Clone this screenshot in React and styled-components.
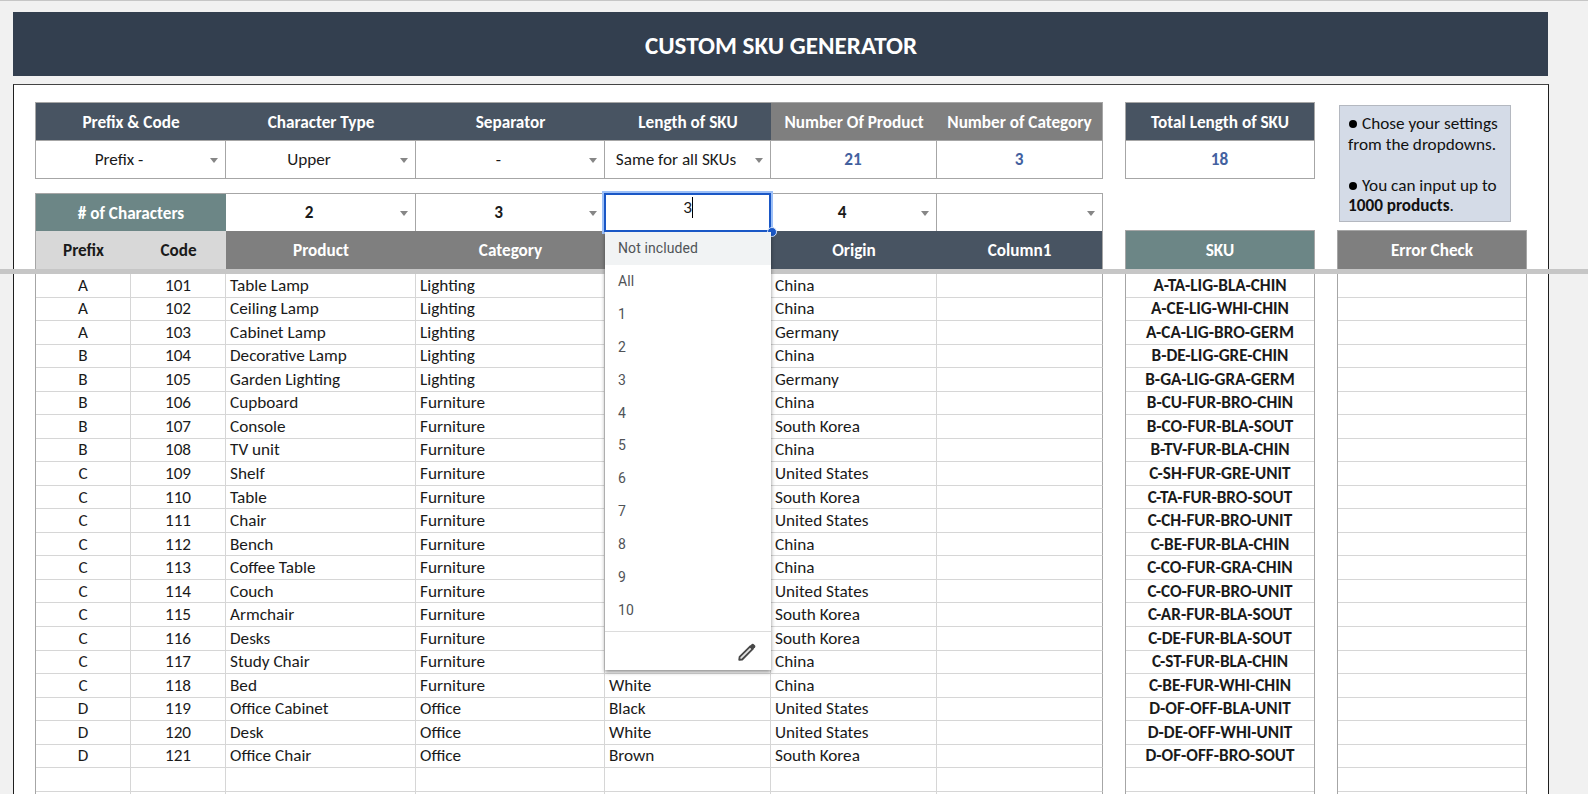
import React from "react";
import styled, { createGlobalStyle, css } from "styled-components";

const GlobalStyle = createGlobalStyle`
  * { box-sizing: border-box; }
  html, body { margin: 0; height: 794px; overflow: hidden; background: #f1f1f1; }
`;

const slate = "#485462";
const grey = "#7f7f7f";
const teal = "#6c8686";
const line = "#a6a6a6";
const softLine = "#d6d6d6";

const Page = styled.div`
  display: flex;
  flex-direction: column;
  width: 1588px;
  height: 794px;
  overflow: hidden;
  border-top: 1px solid #c6c6c6;
  background: #f1f1f1;
  color: #1a1a1a;
  font-family: Carlito, Calibri, Lato, "Open Sans", sans-serif;
  font-size: 17.2px;
`;

const TitleBar = styled.h1`
  flex: none;
  display: flex;
  align-items: center;
  justify-content: center;
  width: 1535px;
  height: 64px;
  margin: 11px 0 8px 13px;
  padding: 3px 0 0 1px;
  background: #333f4f;
  color: #fff;
  font-size: 25.1px;
  font-weight: 700;
`;

const sheet = css`
  width: 1536px;
  margin-left: 13px;
  padding-left: 21px;
  background: #fff;
  border: 0 solid #1f1f1f;
  border-left-width: 1px;
  border-right-width: 1px;
  display: flex;
`;

const FrozenPane = styled.section`
  ${sheet}
  flex: none;
  height: 185px;
  padding-top: 17px;
  border-top: 1px solid #444;
`;

const ScrollPane = styled.section`
  ${sheet}
  flex: 1;
  overflow: hidden;
`;

const FreezeBar = styled.div`
  flex: none;
  height: 5px;
  background: #c6c6c6;
`;

const Block = styled.div`
  flex: none;
  width: ${(p) => p.$width}px;
  margin-right: 22px;
`;

const SettingsGrid = styled.div`
  display: grid;
  grid-template-columns: 190px 190px 189px 166px 166px 166px;
  grid-template-rows: ${(p) => p.$rows};
  border: 1px solid ${line};
  border-right: 0;
  border-bottom-width: ${(p) => (p.$open ? 0 : 1)}px;
  margin-bottom: 14px;
`;

const SingleGrid = styled.div`
  display: grid;
  grid-template-rows: ${(p) => p.$rows};
  border: 1px solid ${line};
  border-bottom-width: ${(p) => (p.$open ? 0 : 1)}px;
  margin-bottom: ${(p) => p.$gap || 0}px;
`;

const HeaderCell = styled.div`
  display: flex;
  align-items: center;
  justify-content: center;
  padding-top: 1px;
  background: ${(p) => p.$bg};
  color: ${(p) => p.$color || "#fff"};
  font-weight: 700;
  white-space: nowrap;
  border-right: ${(p) => (p.$last ? `1px solid ${line}` : 0)};
`;

const PairHeader = styled.div`
  display: grid;
  grid-template-columns: 95px 95px;
`;

const ValueCell = styled.div`
  display: flex;
  align-items: center;
  justify-content: center;
  position: relative;
  padding: 0 ${(p) => (p.$picker ? 23 : 1)}px 0 0;
  border-top: ${(p) => (p.$top ? 1 : 0)}px solid ${line};
  border-right: ${(p) => (p.$bare ? 0 : 1)}px solid ${line};
  color: ${(p) => (p.$result ? "#43619f" : "#1a1a1a")};
  font-weight: ${(p) => (p.$bold || p.$result ? 700 : 400)};
  white-space: nowrap;
`;

const Arrow = styled.i`
  position: absolute;
  right: 7px;
  top: 50%;
  margin-top: -2px;
  border: 4.5px solid transparent;
  border-top: 5px solid #868686;
  border-bottom: 0;
`;

const ActiveCell = styled.div`
  position: relative;
  display: flex;
  justify-content: center;
  margin: -1px 0 -1px -1px;
  padding-top: 2px;
  background: #fff;
  border: 2px solid #1a57c6;
  box-shadow: 0 0 0 2px #9dc0f7;
  line-height: 21px;
  z-index: 3;
`;

const Caret = styled.span`
  width: 1px;
  height: 21px;
  margin-right: -1px;
  background: #000;
`;

const FillHandle = styled.span`
  position: absolute;
  right: -8px;
  bottom: -7px;
  width: 10px;
  height: 10px;
  border: 1px solid #cfe0fb;
  border-radius: 50%;
  background: #1a57c6;
  z-index: -1;
`;

const Menu = styled.ul`
  position: absolute;
  left: -1px;
  top: 37px;
  width: 166px;
  height: 438px;
  margin: 0;
  padding: 0;
  list-style: none;
  display: flex;
  flex-direction: column;
  background: #fff;
  box-shadow: 0 2px 4px rgba(0, 0, 0, 0.45);
  font-family: Roboto, sans-serif;
  font-size: 14px;
  letter-spacing: 0.1px;
  color: #505357;
  clip-path: inset(0 -6px -8px -6px);
`;

const MenuItem = styled.li`
  flex: 0 0 32.93px;
  display: flex;
  align-items: center;
  padding: 0 0 1px 13px;
  background: ${(p) => (p.$active ? "#f1f3f4" : "transparent")};
  line-height: 20px;
`;

const MenuFooter = styled.li`
  flex: 1;
  display: flex;
  align-items: center;
  justify-content: flex-end;
  margin-top: 4px;
  padding: 1px 14px 0 0;
  border-top: 1px solid #dcdcdc;
`;

const Note = styled.aside`
  width: 172px;
  height: 117px;
  margin: 3px 0 8px 2px;
  padding: 8px 8px 0 8px;
  background: #d4dbe7;
  border: 1px solid #b4b8c0;
  color: #111;
  line-height: 20.5px;
  white-space: pre-line;
`;

const Bullet = styled.span`
  display: inline-block;
  width: 8px;
  height: 8px;
  margin: 0 5px 1px 1px;
  border-radius: 50%;
  background: #000;
`;

const DataTable = styled.div`
  border-left: 1px solid ${line};
  border-right: ${(p) => (p.$closed ? 1 : 0)}px solid ${line};
`;

const DataRow = styled.div`
  display: grid;
  grid-template-columns: ${(p) => p.$columns};
  height: 23.54px;
`;

const DataCell = styled.div`
  display: flex;
  align-items: center;
  justify-content: ${(p) => (p.$left ? "flex-start" : "center")};
  padding: 1px 0 0 ${(p) => (p.$left ? 4 : 0)}px;
  border-bottom: 1px solid ${softLine};
  border-right: ${(p) => (p.$bare ? 0 : 1)}px solid ${(p) => (p.$edge ? line : softLine)};
  font-weight: ${(p) => (p.$bold ? 700 : 400)};
  line-height: 20px;
  white-space: nowrap;
`;

const products = [
  ["A", "101", "Table Lamp", "Lighting", "Black", "China", "A-TA-LIG-BLA-CHIN"],
  ["A", "102", "Ceiling Lamp", "Lighting", "White", "China", "A-CE-LIG-WHI-CHIN"],
  ["A", "103", "Cabinet Lamp", "Lighting", "Brown", "Germany", "A-CA-LIG-BRO-GERM"],
  ["B", "104", "Decorative Lamp", "Lighting", "Green", "China", "B-DE-LIG-GRE-CHIN"],
  ["B", "105", "Garden Lighting", "Lighting", "Gray", "Germany", "B-GA-LIG-GRA-GERM"],
  ["B", "106", "Cupboard", "Furniture", "Brown", "China", "B-CU-FUR-BRO-CHIN"],
  ["B", "107", "Console", "Furniture", "Black", "South Korea", "B-CO-FUR-BLA-SOUT"],
  ["B", "108", "TV unit", "Furniture", "Black", "China", "B-TV-FUR-BLA-CHIN"],
  ["C", "109", "Shelf", "Furniture", "Green", "United States", "C-SH-FUR-GRE-UNIT"],
  ["C", "110", "Table", "Furniture", "Brown", "South Korea", "C-TA-FUR-BRO-SOUT"],
  ["C", "111", "Chair", "Furniture", "Brown", "United States", "C-CH-FUR-BRO-UNIT"],
  ["C", "112", "Bench", "Furniture", "Black", "China", "C-BE-FUR-BLA-CHIN"],
  ["C", "113", "Coffee Table", "Furniture", "Gray", "China", "C-CO-FUR-GRA-CHIN"],
  ["C", "114", "Couch", "Furniture", "Brown", "United States", "C-CO-FUR-BRO-UNIT"],
  ["C", "115", "Armchair", "Furniture", "Black", "South Korea", "C-AR-FUR-BLA-SOUT"],
  ["C", "116", "Desks", "Furniture", "Black", "South Korea", "C-DE-FUR-BLA-SOUT"],
  ["C", "117", "Study Chair", "Furniture", "Black", "China", "C-ST-FUR-BLA-CHIN"],
  ["C", "118", "Bed", "Furniture", "White", "China", "C-BE-FUR-WHI-CHIN"],
  ["D", "119", "Office Cabinet", "Office", "Black", "United States", "D-OF-OFF-BLA-UNIT"],
  ["D", "120", "Desk", "Office", "White", "United States", "D-DE-OFF-WHI-UNIT"],
  ["D", "121", "Office Chair", "Office", "Brown", "South Korea", "D-OF-OFF-BRO-SOUT"],
  ["", "", "", "", "", "", ""],
  ["", "", "", "", "", "", ""],
];

// The menu lies over the colour column of these first rows.
const coveredRows = 17;

const options = ["Not included", "All", "1", "2", "3", "4", "5", "6", "7", "8", "9", "10"];

function Picker({ children, ...rest }) {
  return (
    <ValueCell $picker {...rest}>
      {children}
      <Arrow />
    </ValueCell>
  );
}

function Pencil() {
  return (
    <svg width="20" height="20" viewBox="0 0 20 20" fill="none" stroke="#484848">
      <path d="M2.2 17.9 L2.6 14.9 L13.2 4.3 L15.8 6.9 L5.2 17.5 Z" fill="#e2e2e2" strokeWidth="1.8" strokeLinejoin="round" />
      <path d="M12.2 4.7 L14.9 2 Q15.7 1.3 16.5 2 L18.1 3.6 Q18.8 4.4 18.1 5.2 L15.4 7.9 Z" fill="#484848" stroke="none" />
    </svg>
  );
}

function OptionMenu() {
  return (
    <Menu>
      {options.map((option, i) => (
        <MenuItem key={option} $active={i === 0}>{option}</MenuItem>
      ))}
      <MenuFooter><Pencil /></MenuFooter>
    </Menu>
  );
}

function SettingsBlock() {
  return (
    <Block $width={1068}>
      <SettingsGrid $rows="37px 38px">
        <HeaderCell $bg={slate}>Prefix &amp; Code</HeaderCell>
        <HeaderCell $bg={slate}>Character Type</HeaderCell>
        <HeaderCell $bg={slate}>Separator</HeaderCell>
        <HeaderCell $bg={slate}>Length of SKU</HeaderCell>
        <HeaderCell $bg={grey}>Number Of Product</HeaderCell>
        <HeaderCell $bg={grey} $last>Number of Category</HeaderCell>
        <Picker $top>Prefix -</Picker>
        <Picker $top>Upper</Picker>
        <Picker $top>-</Picker>
        <Picker $top>Same for all SKUs</Picker>
        <ValueCell $top $result>21</ValueCell>
        <ValueCell $top $result>3</ValueCell>
      </SettingsGrid>
      <SettingsGrid $rows="37px 38px" $open>
        <HeaderCell $bg={teal}># of Characters</HeaderCell>
        <Picker $bold>2</Picker>
        <Picker $bold>3</Picker>
        <ActiveCell>
          3<Caret />
          <FillHandle />
          <OptionMenu />
        </ActiveCell>
        <Picker $bold>4</Picker>
        <Picker />
        <PairHeader>
          <HeaderCell $bg="#d8d8d8" $color="#1a1a1a">Prefix</HeaderCell>
          <HeaderCell $bg="#d8d8d8" $color="#1a1a1a">Code</HeaderCell>
        </PairHeader>
        <HeaderCell $bg={grey}>Product</HeaderCell>
        <HeaderCell $bg={grey}>Category</HeaderCell>
        <HeaderCell $bg={slate} />
        <HeaderCell $bg={slate}>Origin</HeaderCell>
        <HeaderCell $bg={slate} $last>Column1</HeaderCell>
      </SettingsGrid>
    </Block>
  );
}

export default function App() {
  return (
    <>
      <GlobalStyle />
      <Page>
        <TitleBar>CUSTOM SKU GENERATOR</TitleBar>
        <FrozenPane>
          <SettingsBlock />
          <Block $width={190}>
            <SingleGrid $rows="37px 38px" $gap={51}>
              <HeaderCell $bg={slate}>Total Length of SKU</HeaderCell>
              <ValueCell $top $bare $result>18</ValueCell>
            </SingleGrid>
            <SingleGrid $rows="38px" $open>
              <HeaderCell $bg={teal}>SKU</HeaderCell>
            </SingleGrid>
          </Block>
          <Block $width={190}>
            <Note>
              <Bullet />Chose your settings{"\n"}from the dropdowns.{"\n\n"}
              <Bullet />You can input up to{"\n"}<b>1000 products</b>.
            </Note>
            <SingleGrid $rows="38px" $open>
              <HeaderCell $bg={grey}>Error Check</HeaderCell>
            </SingleGrid>
          </Block>
        </FrozenPane>
        <FreezeBar />
        <ScrollPane>
          <Block $width={1068}>
            <DataTable>
              {products.map(([prefix, code, product, category, color, origin], i) => (
                <DataRow key={i} $columns="95px 95px 190px 189px 166px 166px 166px">
                  <DataCell>{prefix}</DataCell>
                  <DataCell>{code}</DataCell>
                  <DataCell $left>{product}</DataCell>
                  <DataCell $left>{category}</DataCell>
                  <DataCell $left>{i < coveredRows ? "" : color}</DataCell>
                  <DataCell $left>{origin}</DataCell>
                  <DataCell $edge />
                </DataRow>
              ))}
            </DataTable>
          </Block>
          <Block $width={190}>
            <DataTable $closed>
              {products.map((row, i) => (
                <DataRow key={i} $columns="1fr">
                  <DataCell $bold $bare>{row[6]}</DataCell>
                </DataRow>
              ))}
            </DataTable>
          </Block>
          <Block $width={190}>
            <DataTable $closed>
              {products.map((row, i) => (
                <DataRow key={i} $columns="1fr">
                  <DataCell $bare />
                </DataRow>
              ))}
            </DataTable>
          </Block>
        </ScrollPane>
      </Page>
    </>
  );
}
